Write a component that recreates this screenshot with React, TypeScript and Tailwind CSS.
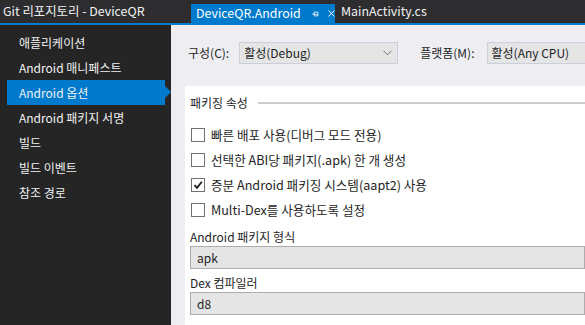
import React from "react";

const font = { fontFamily: '"Noto Sans CJK KR", "Noto Sans", sans-serif' };

function Checkbox({ checked, label }: { checked?: boolean; label: string }) {
  return (
    <div className="flex items-center h-[25px]">
      <div className="w-[14px] h-[14px] border border-[#707070] bg-white flex items-center justify-center shrink-0">
        {checked && (
          <svg width="10" height="10" viewBox="0 0 10 10">
            <path d="M1.5 5.2 L4 7.8 L8.8 1.8" fill="none" stroke="#1a1a1a" strokeWidth="1.8" />
          </svg>
        )}
      </div>
      <span className="ml-[6px] text-[12.6px] text-[#1e1e1e] leading-[16px] whitespace-nowrap">{label}</span>
    </div>
  );
}

export default function App() {
  const items = [
    "애플리케이션",
    "Android 매니페스트",
    "Android 옵션",
    "Android 패키지 서명",
    "빌드",
    "빌드 이벤트",
    "참조 경로",
  ];
  return (
    <div className="w-[585px] h-[325px] overflow-hidden flex flex-col bg-[#252526]" style={font}>
      {/* top bar */}
      <div className="h-[23px] bg-[#2d2d30] flex items-end shrink-0">
        <div className="w-[191px] h-[23px] flex items-center pl-[3px] text-[12.4px] text-[#f1f1f1] whitespace-nowrap">
          Git 리포지토리 - DeviceQR
        </div>
        <div className="w-[144px] h-[19px] bg-[#007acc] flex items-center pl-[5px] text-[12.4px] text-white whitespace-nowrap">
          <span>DeviceQR.Android</span>
          <svg className="ml-[11px]" width="10" height="10" viewBox="0 0 10 10">
            <path d="M0 5 H3 M3 2 V8 M3 2.5 H8 V7.5 H3 M3 5.5 H8" fill="none" stroke="#ffffff" strokeWidth="1" />
          </svg>
          <svg className="ml-[9px]" width="9" height="9" viewBox="0 0 9 9">
            <path d="M0.5 0.5 L8.5 8.5 M8.5 0.5 L0.5 8.5" stroke="#ffffff" strokeWidth="1.3" />
          </svg>
        </div>
        <div className="h-[23px] flex items-center pl-[6px] text-[12.4px] text-[#f1f1f1] whitespace-nowrap">
          MainActivity.cs
        </div>
      </div>
      <div className="h-[2px] bg-[#007acc] shrink-0" />
      <div className="flex flex-1 min-h-0">
        {/* sidebar */}
        <div className="w-[171px] shrink-0 bg-[#252526] pt-[5px]">
          {items.map((it, i) => (
            <div
              key={it}
              className={
                "relative h-[25px] ml-[7px] w-[158px] flex items-center pl-[12px] text-[12px] text-[#f1f1f1] whitespace-nowrap " +
                (i === 2 ? "bg-[#007acc]" : "")
              }
            >
              {it}
              {i === 2 && (
                <div className="absolute right-[-6px] top-[6px] w-0 h-0 border-y-[6.5px] border-y-transparent border-l-[6px] border-l-[#007acc]" />
              )}
            </div>
          ))}
        </div>
        {/* content */}
        <div className="flex-1 bg-[#eeeef2] flex flex-col pl-[14px] text-[12px] text-[#1e1e1e] min-w-0">
          <div className="flex items-center h-[22px] mt-[17px] pl-[3px] whitespace-nowrap">
            <span>구성(C):</span>
            <div className="ml-[10px] w-[159px] h-[22px] border border-[#cccedb] bg-[#e5e5e5] flex items-center pl-[4px] justify-between pr-[5px] shrink-0">
              <span>활성(Debug)</span>
              <svg width="9" height="6" viewBox="0 0 9 6">
                <path d="M0.5 0.8 L4.5 4.8 L8.5 0.8" fill="none" stroke="#6d6d6d" strokeWidth="1" />
              </svg>
            </div>
            <span className="ml-[22px]">플랫폼(M):</span>
            <div className="ml-[12px] w-[140px] h-[22px] border border-[#cccedb] bg-[#e5e5e5] flex items-center pl-[4px] shrink-0">
              <span>활성(Any CPU)</span>
            </div>
          </div>
          <div className="h-px bg-[#a0a0a0] mt-[16px] ml-[1px]" />
          <div className="flex-1 bg-white mt-[6px] pl-[5px] flex flex-col">
            <div className="flex items-center h-[18px] mt-[8px]">
              <span className="whitespace-nowrap">패키징 속성</span>
              <div className="flex-1 h-[2px] bg-[#cccccc] ml-[10px]" />
            </div>
            <div className="mt-[10px] pl-[1px] flex flex-col">
              <Checkbox label="빠른 배포 사용(디버그 모드 전용)" />
              <Checkbox label="선택한 ABI당 패키지(.apk) 한 개 생성" />
              <Checkbox checked label="증분 Android 패키징 시스템(aapt2) 사용" />
              <Checkbox label="Multi-Dex를 사용하도록 설정" />
            </div>
            <div className="h-[18px] mt-[6px] flex items-center whitespace-nowrap">Android 패키지 형식</div>
            <div className="h-[23px] mt-[0px] border border-[#adadad] bg-[#e5e5e5] flex items-center pl-[6px]">apk</div>
            <div className="h-[18px] mt-[5px] flex items-center whitespace-nowrap">Dex 컴파일러</div>
            <div className="h-[23px] mt-[0px] border border-[#adadad] bg-[#e5e5e5] flex items-center pl-[6px]">d8</div>
            <div className="h-[18px] mt-[6px] flex items-center whitespace-nowrap">코드 Shrinker</div>
          </div>
        </div>
      </div>
    </div>
  );
}
